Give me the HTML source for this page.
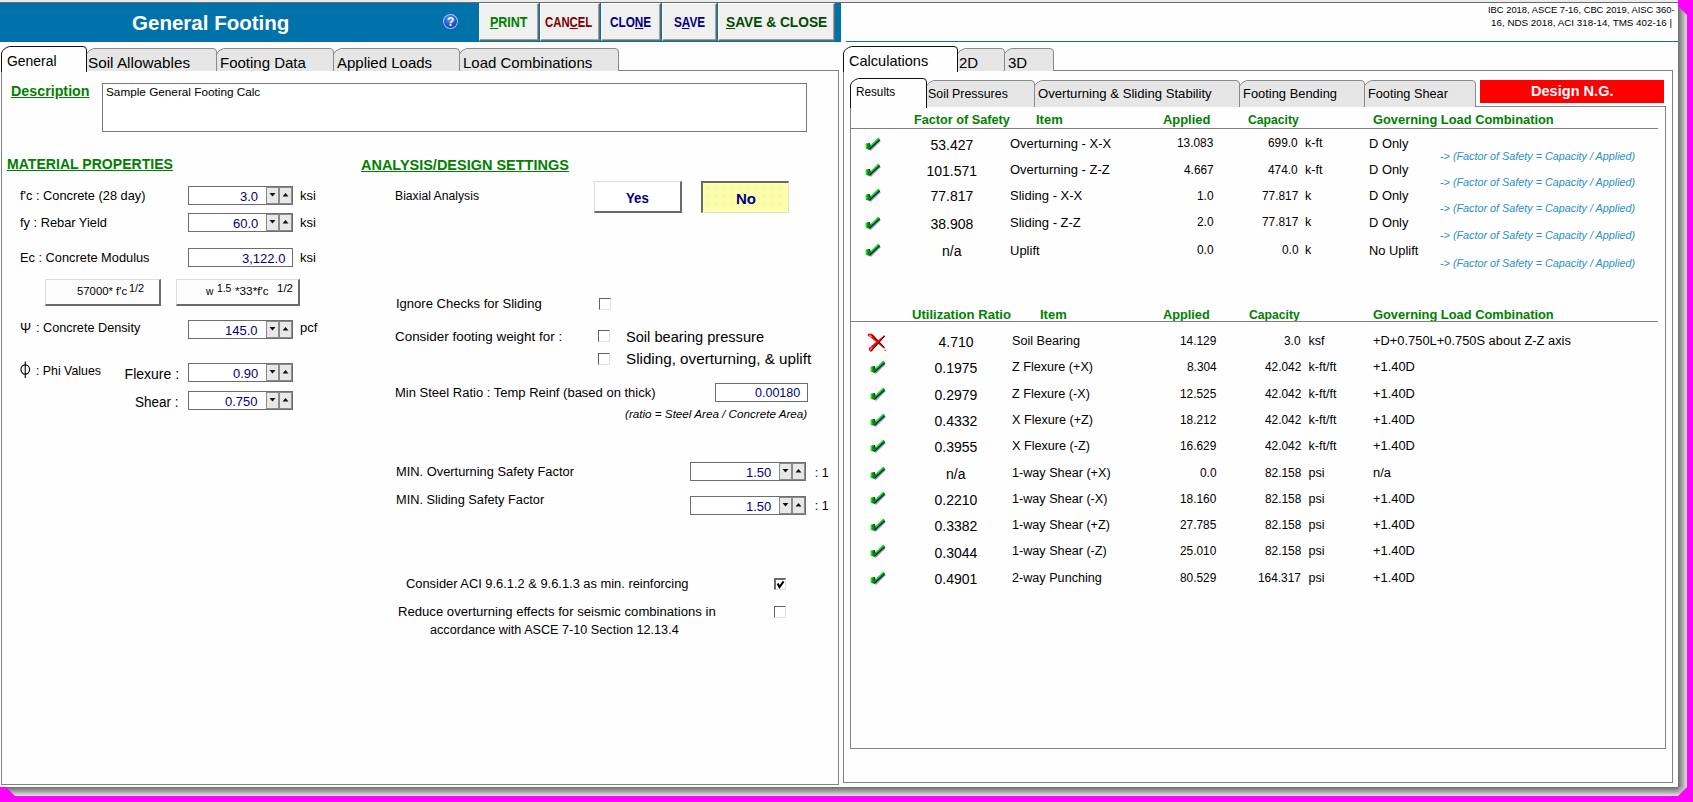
<!DOCTYPE html>
<html><head><meta charset="utf-8"><style>
html,body{margin:0;padding:0;}
body{width:1693px;height:802px;overflow:hidden;background:#ff00ff;position:relative;font-family:"Liberation Sans",sans-serif;}
.r{position:absolute;}
.t{position:absolute;white-space:nowrap;}
u{text-decoration:underline;}
</style></head><body>
<div class="r" style="left:0px;top:0px;width:1678px;height:787px;background:#fefefe;"></div>
<div class="r" style="left:0px;top:0px;width:1678px;height:2px;background:#ececec;"></div>
<div class="r" style="left:0px;top:2px;width:1678px;height:1px;background:#6a6a6a;"></div>
<div class="r" style="left:1678px;top:6px;width:9px;height:781px;clip-path:polygon(0 0,100% 9px,100% 100%,0 100%);background:linear-gradient(to right,#6e6e6e,#9a9a9a 40%,#e4e4e4);"></div>
<div class="r" style="left:6px;top:787px;width:1672px;height:9px;clip-path:polygon(0 0,100% 0,100% 100%,9px 100%);background:linear-gradient(to bottom,#6e6e6e,#9a9a9a 40%,#e4e4e4);"></div>
<div class="r" style="left:1678px;top:787px;width:9px;height:9px;clip-path:polygon(0 0,100% 0,0 100%);background:radial-gradient(circle at 0 0,#8a8a8a 0,#b8b8b8 5px,#e0e0e0 9px);"></div>
<div class="r" style="left:0px;top:3px;width:841px;height:39px;background:#0072aa;"></div>
<div class="t" style="left:132.00px;top:13.47px;font-size:20px;line-height:20px;color:#fff;font-weight:bold;transform:scaleX(1.0261);transform-origin:0 0;">General Footing</div>
<div class="r" style="left:443px;top:14px;width:15px;height:15px;border-radius:50%;background:radial-gradient(circle at 45% 35%,#5a9cff,#1a4cc8 55%,#0a2a8a);box-shadow:0 0 0 1px #a8c8ff inset;"></div>
<div class="t" style="left:447.00px;top:15.84px;font-size:12px;line-height:12px;color:#fff;font-weight:bold;">?</div>
<div class="r" style="left:479px;top:3px;width:60px;height:38px;background:#f0f0f0;border-top:1px solid #fff;border-left:1px solid #fff;border-right:1px solid #696969;border-bottom:1px solid #696969;box-shadow:inset -1px -1px 0 #a0a0a0;box-sizing:border-box;"></div>
<div class="t" style="left:490.00px;top:15.15px;font-size:14px;line-height:14px;color:#008000;font-weight:bold;transform:scaleX(0.8929);transform-origin:0 0;"><u>P</u>RINT</div>
<div class="r" style="left:540px;top:3px;width:60px;height:38px;background:#f0f0f0;border-top:1px solid #fff;border-left:1px solid #fff;border-right:1px solid #696969;border-bottom:1px solid #696969;box-shadow:inset -1px -1px 0 #a0a0a0;box-sizing:border-box;"></div>
<div class="t" style="left:545.20px;top:15.15px;font-size:14px;line-height:14px;color:#800000;font-weight:bold;transform:scaleX(0.8102);transform-origin:0 0;">CAN<u>C</u>EL</div>
<div class="r" style="left:601px;top:3px;width:60px;height:38px;background:#f0f0f0;border-top:1px solid #fff;border-left:1px solid #fff;border-right:1px solid #696969;border-bottom:1px solid #696969;box-shadow:inset -1px -1px 0 #a0a0a0;box-sizing:border-box;"></div>
<div class="t" style="left:610.00px;top:15.15px;font-size:14px;line-height:14px;color:#000080;font-weight:bold;transform:scaleX(0.8408);transform-origin:0 0;">CLO<u>N</u>E</div>
<div class="r" style="left:662px;top:3px;width:55px;height:38px;background:#f0f0f0;border-top:1px solid #fff;border-left:1px solid #fff;border-right:1px solid #696969;border-bottom:1px solid #696969;box-shadow:inset -1px -1px 0 #a0a0a0;box-sizing:border-box;"></div>
<div class="t" style="left:673.80px;top:15.15px;font-size:14px;line-height:14px;color:#000080;font-weight:bold;transform:scaleX(0.8405);transform-origin:0 0;">S<u>A</u>VE</div>
<div class="r" style="left:718px;top:3px;width:117px;height:38px;background:#f0f0f0;border-top:1px solid #fff;border-left:1px solid #fff;border-right:1px solid #696969;border-bottom:1px solid #696969;box-shadow:inset -1px -1px 0 #a0a0a0;box-sizing:border-box;"></div>
<div class="t" style="left:725.60px;top:15.15px;font-size:14px;line-height:14px;color:#004c00;font-weight:bold;transform:scaleX(0.9806);transform-origin:0 0;"><u>S</u>AVE &amp; CLOSE</div>
<div class="r" style="left:846px;top:41px;width:832px;height:1px;background:#0f6ea8;"></div>
<div class="t" style="left:1487.50px;top:5.16px;font-size:9.5px;line-height:9.5px;color:#000;transform:scaleX(0.9842);transform-origin:0 0;">IBC 2018, ASCE 7-16, CBC 2019, AISC 360-</div>
<div class="t" style="left:1490.70px;top:17.96px;font-size:9.5px;line-height:9.5px;color:#000;transform:scaleX(1.0343);transform-origin:0 0;">16, NDS 2018, ACI 318-14, TMS 402-16 |</div>
<div class="r" style="left:1px;top:70px;width:838px;height:715px;border:1px solid #828282;box-sizing:border-box;background:#fefefe;"></div>
<svg class="r" style="left:86px;top:48px" width="131" height="23"><path d="M0.5 23 L0.5 6 Q2.2 2.2 7.5 0.5 L127 0.5 Q130.5 0.5 130.5 4 L130.5 23 Z" fill="#e6e6e6" stroke="none"/><path d="M0.5 23 L0.5 6 Q2.2 2.2 7.5 0.5 L127 0.5 Q130.5 0.5 130.5 4 L130.5 23" fill="none" stroke="#8a8a8a" stroke-width="1"/></svg>
<svg class="r" style="left:216px;top:48px" width="118" height="23"><path d="M0.5 23 L0.5 6 Q2.2 2.2 7.5 0.5 L114 0.5 Q117.5 0.5 117.5 4 L117.5 23 Z" fill="#e6e6e6" stroke="none"/><path d="M0.5 23 L0.5 6 Q2.2 2.2 7.5 0.5 L114 0.5 Q117.5 0.5 117.5 4 L117.5 23" fill="none" stroke="#8a8a8a" stroke-width="1"/></svg>
<svg class="r" style="left:333px;top:48px" width="127" height="23"><path d="M0.5 23 L0.5 6 Q2.2 2.2 7.5 0.5 L123 0.5 Q126.5 0.5 126.5 4 L126.5 23 Z" fill="#e6e6e6" stroke="none"/><path d="M0.5 23 L0.5 6 Q2.2 2.2 7.5 0.5 L123 0.5 Q126.5 0.5 126.5 4 L126.5 23" fill="none" stroke="#8a8a8a" stroke-width="1"/></svg>
<svg class="r" style="left:459px;top:48px" width="160" height="23"><path d="M0.5 23 L0.5 6 Q2.2 2.2 7.5 0.5 L156 0.5 Q159.5 0.5 159.5 4 L159.5 23 Z" fill="#e6e6e6" stroke="none"/><path d="M0.5 23 L0.5 6 Q2.2 2.2 7.5 0.5 L156 0.5 Q159.5 0.5 159.5 4 L159.5 23" fill="none" stroke="#8a8a8a" stroke-width="1"/></svg>
<svg class="r" style="left:1px;top:46px" width="86" height="26"><path d="M0.5 26 L0.5 7 Q2.2 2.2 8.5 0.5 L82 0.5 Q85.5 0.5 85.5 4 L85.5 26 Z" fill="#fefefe" stroke="none"/><path d="M0.5 26 L0.5 7 Q2.2 2.2 8.5 0.5 L82 0.5 Q85.5 0.5 85.5 4 L85.5 26" fill="none" stroke="#111" stroke-width="1"/></svg>
<div class="t" style="left:7.10px;top:53.95px;font-size:14px;line-height:14px;color:#000;transform:scaleX(0.9940);transform-origin:0 0;">General</div>
<div class="t" style="left:88.00px;top:54.60px;font-size:15px;line-height:15px;color:#000;transform:scaleX(1.0200);transform-origin:0 0;">Soil Allowables</div>
<div class="t" style="left:220.00px;top:54.60px;font-size:15px;line-height:15px;color:#000;">Footing Data</div>
<div class="t" style="left:337.00px;top:54.60px;font-size:15px;line-height:15px;color:#000;">Applied Loads</div>
<div class="t" style="left:463.00px;top:54.60px;font-size:15px;line-height:15px;color:#000;">Load Combinations</div>
<div class="t" style="left:10.50px;top:83.00px;font-size:15px;line-height:15px;color:#008000;font-weight:bold;text-decoration:underline;transform:scaleX(0.9518);transform-origin:0 0;">Description</div>
<div class="r" style="left:102px;top:83px;width:705px;height:49px;border:1px solid #7a7a7a;box-sizing:border-box;background:#fff;"></div>
<div class="t" style="left:106.00px;top:86.69px;font-size:11px;line-height:11px;color:#000;transform:scaleX(1.0690);transform-origin:0 0;">Sample General Footing Calc</div>
<div class="t" style="left:6.70px;top:155.80px;font-size:15px;line-height:15px;color:#008000;font-weight:bold;text-decoration:underline;transform:scaleX(0.9379);transform-origin:0 0;">MATERIAL PROPERTIES</div>
<div class="t" style="left:360.50px;top:156.50px;font-size:15px;line-height:15px;color:#008000;font-weight:bold;text-decoration:underline;transform:scaleX(0.9651);transform-origin:0 0;">ANALYSIS/DESIGN SETTINGS</div>
<div class="t" style="left:20.30px;top:188.80px;font-size:13px;line-height:13px;color:#000;transform:scaleX(0.9844);transform-origin:0 0;">f&#x27;c : Concrete (28 day)</div>
<div class="r" style="left:188px;top:186px;width:105px;height:19px;border:1px solid #6e6e6e;box-sizing:border-box;background:#fff;"></div>
<div class="r" style="left:266px;top:187px;width:13px;height:17px;background:#e8e8e8;border:1px solid #8a8a8a;box-sizing:border-box;"></div>
<div class="r" style="left:279px;top:187px;width:13px;height:17px;background:#e8e8e8;border:1px solid #8a8a8a;box-sizing:border-box;"></div>
<svg class="r" style="left:0;top:0;overflow:visible" width="1" height="1"><polygon points="269.5,193.0 275.5,193.0 272.5,196.5" fill="#111"/><polygon points="282.5,196.5 288.5,196.5 285.5,193.0" fill="#111"/></svg>
<div class="t" style="left:240.00px;top:190.00px;font-size:13px;line-height:13px;color:#000080;">3.0</div>
<div class="t" style="left:300.00px;top:188.80px;font-size:13px;line-height:13px;color:#000;">ksi</div>
<div class="t" style="left:20.30px;top:215.80px;font-size:13px;line-height:13px;color:#000;transform:scaleX(0.9852);transform-origin:0 0;">fy : Rebar Yield</div>
<div class="r" style="left:188px;top:213px;width:105px;height:19px;border:1px solid #6e6e6e;box-sizing:border-box;background:#fff;"></div>
<div class="r" style="left:266px;top:214px;width:13px;height:17px;background:#e8e8e8;border:1px solid #8a8a8a;box-sizing:border-box;"></div>
<div class="r" style="left:279px;top:214px;width:13px;height:17px;background:#e8e8e8;border:1px solid #8a8a8a;box-sizing:border-box;"></div>
<svg class="r" style="left:0;top:0;overflow:visible" width="1" height="1"><polygon points="269.5,220.0 275.5,220.0 272.5,223.5" fill="#111"/><polygon points="282.5,223.5 288.5,223.5 285.5,220.0" fill="#111"/></svg>
<div class="t" style="left:233.00px;top:217.00px;font-size:13px;line-height:13px;color:#000080;">60.0</div>
<div class="t" style="left:300.00px;top:215.80px;font-size:13px;line-height:13px;color:#000;">ksi</div>
<div class="t" style="left:20.30px;top:251.00px;font-size:13px;line-height:13px;color:#000;transform:scaleX(0.9848);transform-origin:0 0;">Ec : Concrete Modulus</div>
<div class="r" style="left:188px;top:248px;width:105px;height:19px;border:1px solid #6e6e6e;box-sizing:border-box;background:#fff;"></div>
<div class="t" style="left:242.00px;top:252.00px;font-size:13px;line-height:13px;color:#000080;">3,122.0</div>
<div class="t" style="left:300.00px;top:251.00px;font-size:13px;line-height:13px;color:#000;">ksi</div>
<div class="r" style="left:45px;top:279px;width:116px;height:27px;background:#fcfcfc;border-top:1px solid #dcdcdc;border-left:1px solid #dcdcdc;border-right:2px solid #6a6a6a;border-bottom:2px solid #6a6a6a;box-sizing:border-box;"></div>
<div class="r" style="left:176px;top:279px;width:124px;height:27px;background:#fcfcfc;border-top:1px solid #dcdcdc;border-left:1px solid #dcdcdc;border-right:2px solid #6a6a6a;border-bottom:2px solid #6a6a6a;box-sizing:border-box;"></div>
<div class="t" style="left:77.40px;top:285.89px;font-size:11px;line-height:11px;color:#000;transform:scaleX(1.0306);transform-origin:0 0;">57000* f&#x27;c</div>
<div class="t" style="left:128.80px;top:283.09px;font-size:11px;line-height:11px;color:#000;transform:scaleX(0.9933);transform-origin:0 0;">1/2</div>
<div class="t" style="left:206.33px;top:286.29px;font-size:11px;line-height:11px;color:#000;transform:scaleX(0.9333);transform-origin:0 0;">w</div>
<div class="t" style="left:216.60px;top:282.59px;font-size:11px;line-height:11px;color:#000;transform:scaleX(0.9400);transform-origin:0 0;">1.5</div>
<div class="t" style="left:235.30px;top:285.89px;font-size:11px;line-height:11px;color:#000;transform:scaleX(1.0688);transform-origin:0 0;">*33*f&#x27;c</div>
<div class="t" style="left:277.00px;top:282.69px;font-size:11px;line-height:11px;color:#000;transform:scaleX(1.0467);transform-origin:0 0;">1/2</div>
<div class="t" style="left:20.00px;top:320.30px;font-size:15px;line-height:15px;color:#000;transform:scaleX(0.8846);transform-origin:0 0;">Ψ</div>
<div class="t" style="left:36.20px;top:320.80px;font-size:13px;line-height:13px;color:#000;transform:scaleX(0.9748);transform-origin:0 0;">: Concrete Density</div>
<div class="r" style="left:188px;top:320px;width:105px;height:19px;border:1px solid #6e6e6e;box-sizing:border-box;background:#fff;"></div>
<div class="r" style="left:266px;top:321px;width:13px;height:17px;background:#e8e8e8;border:1px solid #8a8a8a;box-sizing:border-box;"></div>
<div class="r" style="left:279px;top:321px;width:13px;height:17px;background:#e8e8e8;border:1px solid #8a8a8a;box-sizing:border-box;"></div>
<svg class="r" style="left:0;top:0;overflow:visible" width="1" height="1"><polygon points="269.5,327.0 275.5,327.0 272.5,330.5" fill="#111"/><polygon points="282.5,330.5 288.5,330.5 285.5,327.0" fill="#111"/></svg>
<div class="t" style="left:225.00px;top:324.00px;font-size:13px;line-height:13px;color:#000080;">145.0</div>
<div class="t" style="left:300.00px;top:320.80px;font-size:13px;line-height:13px;color:#000;">pcf</div>
<svg class="r" style="left:18px;top:359px" width="16" height="22"><ellipse cx="7.25" cy="10.5" rx="4.3" ry="4.6" fill="none" stroke="#000" stroke-width="1.1"/><path d="M7.25 2.5 L7.25 19" stroke="#000" stroke-width="1.1"/></svg>
<div class="t" style="left:36.20px;top:363.90px;font-size:13px;line-height:13px;color:#000;transform:scaleX(0.9493);transform-origin:0 0;">: Phi Values</div>
<div class="t" style="left:124.60px;top:367.15px;font-size:14px;line-height:14px;color:#000;">Flexure :</div>
<div class="r" style="left:188px;top:363px;width:105px;height:19px;border:1px solid #6e6e6e;box-sizing:border-box;background:#fff;"></div>
<div class="r" style="left:266px;top:364px;width:13px;height:17px;background:#e8e8e8;border:1px solid #8a8a8a;box-sizing:border-box;"></div>
<div class="r" style="left:279px;top:364px;width:13px;height:17px;background:#e8e8e8;border:1px solid #8a8a8a;box-sizing:border-box;"></div>
<svg class="r" style="left:0;top:0;overflow:visible" width="1" height="1"><polygon points="269.5,370.0 275.5,370.0 272.5,373.5" fill="#111"/><polygon points="282.5,373.5 288.5,373.5 285.5,370.0" fill="#111"/></svg>
<div class="t" style="left:233.00px;top:367.00px;font-size:13px;line-height:13px;color:#000080;">0.90</div>
<div class="t" style="left:134.70px;top:394.75px;font-size:14px;line-height:14px;color:#000;transform:scaleX(0.9667);transform-origin:0 0;">Shear :</div>
<div class="r" style="left:188px;top:391px;width:105px;height:19px;border:1px solid #6e6e6e;box-sizing:border-box;background:#fff;"></div>
<div class="r" style="left:266px;top:392px;width:13px;height:17px;background:#e8e8e8;border:1px solid #8a8a8a;box-sizing:border-box;"></div>
<div class="r" style="left:279px;top:392px;width:13px;height:17px;background:#e8e8e8;border:1px solid #8a8a8a;box-sizing:border-box;"></div>
<svg class="r" style="left:0;top:0;overflow:visible" width="1" height="1"><polygon points="269.5,398.0 275.5,398.0 272.5,401.5" fill="#111"/><polygon points="282.5,401.5 288.5,401.5 285.5,398.0" fill="#111"/></svg>
<div class="t" style="left:225.00px;top:395.00px;font-size:13px;line-height:13px;color:#000080;">0.750</div>
<div class="t" style="left:395.40px;top:189.92px;font-size:12.5px;line-height:12.5px;color:#000;transform:scaleX(0.9747);transform-origin:0 0;">Biaxial Analysis</div>
<div class="r" style="left:594px;top:181px;width:88px;height:32px;background:#fff;border-top:1px solid #dcdcdc;border-left:1px solid #dcdcdc;border-right:2px solid #6a6a6a;border-bottom:2px solid #6a6a6a;box-sizing:border-box;"></div>
<div class="t" style="left:626.10px;top:190.30px;font-size:15px;line-height:15px;color:#000080;font-weight:bold;transform:scaleX(0.8846);transform-origin:0 0;">Yes</div>
<div class="r" style="left:701px;top:181px;width:88px;height:32px;background:#ffffb0;border-top:2px solid #6a6a6a;border-left:2px solid #6a6a6a;border-right:1px solid #e0e0e0;border-bottom:1px solid #e0e0e0;box-sizing:border-box;"></div>
<svg class="r" style="left:703px;top:183px" width="84" height="28"><defs><pattern id="dith" x="0" y="0" width="2" height="2" patternUnits="userSpaceOnUse"><rect width="2" height="2" fill="#fff"/><rect x="0" y="0" width="1" height="1" fill="#ffff5a"/><rect x="1" y="1" width="1" height="1" fill="#ffff5a"/></pattern></defs><rect width="84" height="28" fill="url(#dith)"/></svg>
<div class="t" style="left:736.00px;top:191.10px;font-size:15px;line-height:15px;color:#000080;font-weight:bold;">No</div>
<div class="t" style="left:396.40px;top:298.22px;font-size:12.5px;line-height:12.5px;color:#000;transform:scaleX(1.0429);transform-origin:0 0;">Ignore Checks for Sliding</div>
<div class="r" style="left:599px;top:298px;width:12px;height:12px;border-top:1px solid #606060;border-left:1px solid #606060;border-right:1px solid #e0e0e0;border-bottom:1px solid #e0e0e0;box-sizing:border-box;background:#fff;"></div>
<div class="t" style="left:395.40px;top:330.72px;font-size:12.5px;line-height:12.5px;color:#000;transform:scaleX(1.0737);transform-origin:0 0;">Consider footing weight for :</div>
<div class="r" style="left:598px;top:330px;width:12px;height:12px;border-top:1px solid #606060;border-left:1px solid #606060;border-right:1px solid #e0e0e0;border-bottom:1px solid #e0e0e0;box-sizing:border-box;background:#fff;"></div>
<div class="t" style="left:625.70px;top:329.73px;font-size:14.5px;line-height:14.5px;color:#000;transform:scaleX(1.0073);transform-origin:0 0;">Soil bearing pressure</div>
<div class="r" style="left:598px;top:353px;width:12px;height:12px;border-top:1px solid #606060;border-left:1px solid #606060;border-right:1px solid #e0e0e0;border-bottom:1px solid #e0e0e0;box-sizing:border-box;background:#fff;"></div>
<div class="t" style="left:625.70px;top:352.43px;font-size:14.5px;line-height:14.5px;color:#000;transform:scaleX(1.0492);transform-origin:0 0;">Sliding, overturning, &amp; uplift</div>
<div class="t" style="left:395.40px;top:386.92px;font-size:12.5px;line-height:12.5px;color:#000;transform:scaleX(1.0398);transform-origin:0 0;">Min Steel Ratio : Temp Reinf (based on thick)</div>
<div class="r" style="left:715px;top:383px;width:93px;height:19px;border:1px solid #6e6e6e;box-sizing:border-box;background:#fff;"></div>
<div class="t" style="left:755.00px;top:386.92px;font-size:12.5px;line-height:12.5px;color:#000080;">0.00180</div>
<div class="t" style="left:624.70px;top:408.57px;font-size:11.5px;line-height:11.5px;color:#000;font-style:italic;transform:scaleX(1.0139);transform-origin:0 0;">(ratio = Steel Area / Concrete Area)</div>
<div class="t" style="left:395.50px;top:465.62px;font-size:12.5px;line-height:12.5px;color:#000;transform:scaleX(1.0287);transform-origin:0 0;">MIN. Overturning Safety Factor</div>
<div class="r" style="left:690px;top:462px;width:116px;height:19px;border:1px solid #6e6e6e;box-sizing:border-box;background:#fff;"></div>
<div class="r" style="left:779px;top:463px;width:13px;height:17px;background:#e8e8e8;border:1px solid #8a8a8a;box-sizing:border-box;"></div>
<div class="r" style="left:792px;top:463px;width:13px;height:17px;background:#e8e8e8;border:1px solid #8a8a8a;box-sizing:border-box;"></div>
<svg class="r" style="left:0;top:0;overflow:visible" width="1" height="1"><polygon points="782.5,469.0 788.5,469.0 785.5,472.5" fill="#111"/><polygon points="795.5,472.5 801.5,472.5 798.5,469.0" fill="#111"/></svg>
<div class="t" style="left:746.00px;top:466.00px;font-size:13px;line-height:13px;color:#000080;">1.50</div>
<div class="t" style="left:814.70px;top:466.62px;font-size:12.5px;line-height:12.5px;color:#000;">: 1</div>
<div class="t" style="left:395.50px;top:493.52px;font-size:12.5px;line-height:12.5px;color:#000;transform:scaleX(1.0205);transform-origin:0 0;">MIN. Sliding Safety Factor</div>
<div class="r" style="left:690px;top:496px;width:116px;height:19px;border:1px solid #6e6e6e;box-sizing:border-box;background:#fff;"></div>
<div class="r" style="left:779px;top:497px;width:13px;height:17px;background:#e8e8e8;border:1px solid #8a8a8a;box-sizing:border-box;"></div>
<div class="r" style="left:792px;top:497px;width:13px;height:17px;background:#e8e8e8;border:1px solid #8a8a8a;box-sizing:border-box;"></div>
<svg class="r" style="left:0;top:0;overflow:visible" width="1" height="1"><polygon points="782.5,503.0 788.5,503.0 785.5,506.5" fill="#111"/><polygon points="795.5,506.5 801.5,506.5 798.5,503.0" fill="#111"/></svg>
<div class="t" style="left:746.00px;top:500.00px;font-size:13px;line-height:13px;color:#000080;">1.50</div>
<div class="t" style="left:814.70px;top:500.02px;font-size:12.5px;line-height:12.5px;color:#000;">: 1</div>
<div class="t" style="left:405.70px;top:578.42px;font-size:12.5px;line-height:12.5px;color:#000;transform:scaleX(1.0292);transform-origin:0 0;">Consider ACI 9.6.1.2 &amp; 9.6.1.3 as min. reinforcing</div>
<div class="r" style="left:774px;top:578px;width:12px;height:12px;border-top:2px solid #6a6a6a;border-left:2px solid #6a6a6a;border-right:1px solid #e0e0e0;border-bottom:1px solid #e0e0e0;box-sizing:border-box;background:#fff;"></div>
<svg class="r" style="left:774px;top:578px" width="12" height="12"><path d="M3.6 5.4 L5.5 9 L9.6 3.4" stroke="#000" stroke-width="2.1" fill="none" stroke-linejoin="miter"/></svg>
<div class="t" style="left:397.50px;top:606.02px;font-size:12.5px;line-height:12.5px;color:#000;transform:scaleX(1.0495);transform-origin:0 0;">Reduce overturning effects for seismic combinations in</div>
<div class="t" style="left:429.90px;top:624.02px;font-size:12.5px;line-height:12.5px;color:#000;transform:scaleX(1.0110);transform-origin:0 0;">accordance with ASCE 7-10 Section 12.13.4</div>
<div class="r" style="left:774px;top:606px;width:12px;height:12px;border-top:1px solid #606060;border-left:1px solid #606060;border-right:1px solid #e0e0e0;border-bottom:1px solid #e0e0e0;box-sizing:border-box;background:#fff;"></div>
<div class="r" style="left:843px;top:70px;width:830px;height:713px;border:1px solid #828282;box-sizing:border-box;background:#fefefe;"></div>
<svg class="r" style="left:957px;top:48px" width="48" height="23"><path d="M0.5 23 L0.5 6 Q2.2 2.2 7.5 0.5 L44 0.5 Q47.5 0.5 47.5 4 L47.5 23 Z" fill="#e6e6e6" stroke="none"/><path d="M0.5 23 L0.5 6 Q2.2 2.2 7.5 0.5 L44 0.5 Q47.5 0.5 47.5 4 L47.5 23" fill="none" stroke="#8a8a8a" stroke-width="1"/></svg>
<svg class="r" style="left:1004px;top:48px" width="50" height="23"><path d="M0.5 23 L0.5 6 Q2.2 2.2 7.5 0.5 L46 0.5 Q49.5 0.5 49.5 4 L49.5 23 Z" fill="#e6e6e6" stroke="none"/><path d="M0.5 23 L0.5 6 Q2.2 2.2 7.5 0.5 L46 0.5 Q49.5 0.5 49.5 4 L49.5 23" fill="none" stroke="#8a8a8a" stroke-width="1"/></svg>
<svg class="r" style="left:843px;top:46px" width="115" height="26"><path d="M0.5 26 L0.5 7 Q2.2 2.2 8.5 0.5 L111 0.5 Q114.5 0.5 114.5 4 L114.5 26 Z" fill="#fefefe" stroke="none"/><path d="M0.5 26 L0.5 7 Q2.2 2.2 8.5 0.5 L111 0.5 Q114.5 0.5 114.5 4 L114.5 26" fill="none" stroke="#111" stroke-width="1"/></svg>
<div class="t" style="left:848.80px;top:53.30px;font-size:15px;line-height:15px;color:#000;transform:scaleX(0.9695);transform-origin:0 0;">Calculations</div>
<div class="t" style="left:959.00px;top:54.60px;font-size:15px;line-height:15px;color:#000;">2D</div>
<div class="t" style="left:1008.00px;top:54.60px;font-size:15px;line-height:15px;color:#000;">3D</div>
<div class="r" style="left:850px;top:106px;width:816px;height:643px;border:1px solid #828282;box-sizing:border-box;background:#fefefe;"></div>
<svg class="r" style="left:926px;top:80px" width="109" height="27"><path d="M0.5 27 L0.5 6 Q2.2 2.2 7.5 0.5 L105 0.5 Q108.5 0.5 108.5 4 L108.5 27 Z" fill="#e6e6e6" stroke="none"/><path d="M0.5 27 L0.5 6 Q2.2 2.2 7.5 0.5 L105 0.5 Q108.5 0.5 108.5 4 L108.5 27" fill="none" stroke="#8a8a8a" stroke-width="1"/></svg>
<svg class="r" style="left:1034px;top:80px" width="206" height="27"><path d="M0.5 27 L0.5 6 Q2.2 2.2 7.5 0.5 L202 0.5 Q205.5 0.5 205.5 4 L205.5 27 Z" fill="#e6e6e6" stroke="none"/><path d="M0.5 27 L0.5 6 Q2.2 2.2 7.5 0.5 L202 0.5 Q205.5 0.5 205.5 4 L205.5 27" fill="none" stroke="#8a8a8a" stroke-width="1"/></svg>
<svg class="r" style="left:1239px;top:80px" width="126" height="27"><path d="M0.5 27 L0.5 6 Q2.2 2.2 7.5 0.5 L122 0.5 Q125.5 0.5 125.5 4 L125.5 27 Z" fill="#e6e6e6" stroke="none"/><path d="M0.5 27 L0.5 6 Q2.2 2.2 7.5 0.5 L122 0.5 Q125.5 0.5 125.5 4 L125.5 27" fill="none" stroke="#8a8a8a" stroke-width="1"/></svg>
<svg class="r" style="left:1364px;top:80px" width="112" height="27"><path d="M0.5 27 L0.5 6 Q2.2 2.2 7.5 0.5 L108 0.5 Q111.5 0.5 111.5 4 L111.5 27 Z" fill="#e6e6e6" stroke="none"/><path d="M0.5 27 L0.5 6 Q2.2 2.2 7.5 0.5 L108 0.5 Q111.5 0.5 111.5 4 L111.5 27" fill="none" stroke="#8a8a8a" stroke-width="1"/></svg>
<svg class="r" style="left:850px;top:78px" width="77" height="30"><path d="M0.5 30 L0.5 7 Q2.2 2.2 8.5 0.5 L73 0.5 Q76.5 0.5 76.5 4 L76.5 30 Z" fill="#fefefe" stroke="none"/><path d="M0.5 30 L0.5 7 Q2.2 2.2 8.5 0.5 L73 0.5 Q76.5 0.5 76.5 4 L76.5 30" fill="none" stroke="#111" stroke-width="1"/></svg>
<div class="t" style="left:855.90px;top:84.60px;font-size:13px;line-height:13px;color:#000;transform:scaleX(0.9023);transform-origin:0 0;">Results</div>
<div class="t" style="left:927.50px;top:86.90px;font-size:13px;line-height:13px;color:#000;transform:scaleX(0.9524);transform-origin:0 0;">Soil Pressures</div>
<div class="t" style="left:1038.20px;top:86.90px;font-size:13px;line-height:13px;color:#000;transform:scaleX(1.0098);transform-origin:0 0;">Overturning &amp; Sliding Stability</div>
<div class="t" style="left:1243.30px;top:86.90px;font-size:13px;line-height:13px;color:#000;transform:scaleX(0.9926);transform-origin:0 0;">Footing Bending</div>
<div class="t" style="left:1368.30px;top:86.90px;font-size:13px;line-height:13px;color:#000;transform:scaleX(0.9780);transform-origin:0 0;">Footing Shear</div>
<div class="r" style="left:1480px;top:80px;width:184px;height:23px;background:#ff0000;"></div>
<div class="t" style="left:1531.00px;top:82.80px;font-size:15px;line-height:15px;color:#fff;font-weight:bold;transform:scaleX(0.9706);transform-origin:0 0;">Design N.G.</div>
<div class="t" style="left:914.40px;top:112.80px;font-size:13px;line-height:13px;color:#008000;font-weight:bold;transform:scaleX(0.9758);transform-origin:0 0;">Factor of Safety</div>
<div class="t" style="left:1036.00px;top:112.80px;font-size:13px;line-height:13px;color:#008000;font-weight:bold;">Item</div>
<div class="t" style="left:1163.00px;top:112.80px;font-size:13px;line-height:13px;color:#008000;font-weight:bold;transform:scaleX(0.9938);transform-origin:0 0;">Applied</div>
<div class="t" style="left:1248.30px;top:112.80px;font-size:13px;line-height:13px;color:#008000;font-weight:bold;transform:scaleX(0.9364);transform-origin:0 0;">Capacity</div>
<div class="t" style="left:1373.00px;top:112.80px;font-size:13px;line-height:13px;color:#008000;font-weight:bold;transform:scaleX(0.9891);transform-origin:0 0;">Governing Load Combination</div>
<div class="r" style="left:850px;top:128px;width:808px;height:1px;background:#808080;"></div>
<svg class="r" style="left:862px;top:134px" width="22" height="20"><path d="M8.3 16.6 L18.3 6.8" stroke="#9a9a9a" stroke-width="1.3" fill="none"/><polygon points="3.8,9.8 6.8,9 8.3,12.2 16.6,3.8 17.8,5.2 8.2,15.8 6.8,15.8 3.8,14.6" fill="#008a00"/><path d="M4.6 10 L4.6 14.6" stroke="#00f000" stroke-width="1.4" fill="none"/><path d="M8.8 11.8 L16.6 4.2" stroke="#00f000" stroke-width="1.3" fill="none"/><path d="M7.6 15.4 L17.8 5.8" stroke="#000080" stroke-width="1.1" fill="none"/><path d="M7.4 9.2 L8.2 12" stroke="#000080" stroke-width="1" fill="none"/></svg>
<div class="t" style="left:930.50px;top:137.90px;font-size:14px;line-height:14px;color:#000;">53.427</div>
<div class="t" style="left:1009.60px;top:137.72px;font-size:12.5px;line-height:12.5px;color:#000;transform:scaleX(1.0400);transform-origin:0 0;">Overturning - X-X</div>
<div class="t" style="left:1177.20px;top:137.42px;font-size:12.5px;line-height:12.5px;color:#000;transform:scaleX(0.9500);transform-origin:0 0;">13.083</div>
<div class="t" style="left:1268.25px;top:137.42px;font-size:12.5px;line-height:12.5px;color:#000;transform:scaleX(0.9500);transform-origin:0 0;">699.0</div>
<div class="t" style="left:1305.00px;top:137.42px;font-size:12.5px;line-height:12.5px;color:#000;">k-ft</div>
<div class="t" style="left:1369.00px;top:137.92px;font-size:12.5px;line-height:12.5px;color:#000;transform:scaleX(1.0300);transform-origin:0 0;">D Only</div>
<svg class="r" style="left:862px;top:160px" width="22" height="20"><path d="M8.3 16.6 L18.3 6.8" stroke="#9a9a9a" stroke-width="1.3" fill="none"/><polygon points="3.8,9.8 6.8,9 8.3,12.2 16.6,3.8 17.8,5.2 8.2,15.8 6.8,15.8 3.8,14.6" fill="#008a00"/><path d="M4.6 10 L4.6 14.6" stroke="#00f000" stroke-width="1.4" fill="none"/><path d="M8.8 11.8 L16.6 4.2" stroke="#00f000" stroke-width="1.3" fill="none"/><path d="M7.6 15.4 L17.8 5.8" stroke="#000080" stroke-width="1.1" fill="none"/><path d="M7.4 9.2 L8.2 12" stroke="#000080" stroke-width="1" fill="none"/></svg>
<div class="t" style="left:926.50px;top:163.65px;font-size:14px;line-height:14px;color:#000;">101.571</div>
<div class="t" style="left:1009.60px;top:163.82px;font-size:12.5px;line-height:12.5px;color:#000;transform:scaleX(1.0400);transform-origin:0 0;">Overturning - Z-Z</div>
<div class="t" style="left:1183.85px;top:163.52px;font-size:12.5px;line-height:12.5px;color:#000;transform:scaleX(0.9500);transform-origin:0 0;">4.667</div>
<div class="t" style="left:1268.25px;top:163.52px;font-size:12.5px;line-height:12.5px;color:#000;transform:scaleX(0.9500);transform-origin:0 0;">474.0</div>
<div class="t" style="left:1305.00px;top:163.52px;font-size:12.5px;line-height:12.5px;color:#000;">k-ft</div>
<div class="t" style="left:1369.00px;top:164.02px;font-size:12.5px;line-height:12.5px;color:#000;transform:scaleX(1.0300);transform-origin:0 0;">D Only</div>
<svg class="r" style="left:862px;top:185px" width="22" height="20"><path d="M8.3 16.6 L18.3 6.8" stroke="#9a9a9a" stroke-width="1.3" fill="none"/><polygon points="3.8,9.8 6.8,9 8.3,12.2 16.6,3.8 17.8,5.2 8.2,15.8 6.8,15.8 3.8,14.6" fill="#008a00"/><path d="M4.6 10 L4.6 14.6" stroke="#00f000" stroke-width="1.4" fill="none"/><path d="M8.8 11.8 L16.6 4.2" stroke="#00f000" stroke-width="1.3" fill="none"/><path d="M7.6 15.4 L17.8 5.8" stroke="#000080" stroke-width="1.1" fill="none"/><path d="M7.4 9.2 L8.2 12" stroke="#000080" stroke-width="1" fill="none"/></svg>
<div class="t" style="left:930.50px;top:189.35px;font-size:14px;line-height:14px;color:#000;">77.817</div>
<div class="t" style="left:1009.60px;top:190.02px;font-size:12.5px;line-height:12.5px;color:#000;transform:scaleX(1.0400);transform-origin:0 0;">Sliding - X-X</div>
<div class="t" style="left:1197.15px;top:189.72px;font-size:12.5px;line-height:12.5px;color:#000;transform:scaleX(0.9500);transform-origin:0 0;">1.0</div>
<div class="t" style="left:1261.60px;top:189.72px;font-size:12.5px;line-height:12.5px;color:#000;transform:scaleX(0.9500);transform-origin:0 0;">77.817</div>
<div class="t" style="left:1305.00px;top:189.72px;font-size:12.5px;line-height:12.5px;color:#000;">k</div>
<div class="t" style="left:1369.00px;top:190.22px;font-size:12.5px;line-height:12.5px;color:#000;transform:scaleX(1.0300);transform-origin:0 0;">D Only</div>
<svg class="r" style="left:862px;top:213px" width="22" height="20"><path d="M8.3 16.6 L18.3 6.8" stroke="#9a9a9a" stroke-width="1.3" fill="none"/><polygon points="3.8,9.8 6.8,9 8.3,12.2 16.6,3.8 17.8,5.2 8.2,15.8 6.8,15.8 3.8,14.6" fill="#008a00"/><path d="M4.6 10 L4.6 14.6" stroke="#00f000" stroke-width="1.4" fill="none"/><path d="M8.8 11.8 L16.6 4.2" stroke="#00f000" stroke-width="1.3" fill="none"/><path d="M7.6 15.4 L17.8 5.8" stroke="#000080" stroke-width="1.1" fill="none"/><path d="M7.4 9.2 L8.2 12" stroke="#000080" stroke-width="1" fill="none"/></svg>
<div class="t" style="left:930.50px;top:216.85px;font-size:14px;line-height:14px;color:#000;">38.908</div>
<div class="t" style="left:1009.60px;top:216.72px;font-size:12.5px;line-height:12.5px;color:#000;transform:scaleX(1.0400);transform-origin:0 0;">Sliding - Z-Z</div>
<div class="t" style="left:1197.15px;top:216.42px;font-size:12.5px;line-height:12.5px;color:#000;transform:scaleX(0.9500);transform-origin:0 0;">2.0</div>
<div class="t" style="left:1261.60px;top:216.42px;font-size:12.5px;line-height:12.5px;color:#000;transform:scaleX(0.9500);transform-origin:0 0;">77.817</div>
<div class="t" style="left:1305.00px;top:216.42px;font-size:12.5px;line-height:12.5px;color:#000;">k</div>
<div class="t" style="left:1369.00px;top:216.92px;font-size:12.5px;line-height:12.5px;color:#000;transform:scaleX(1.0300);transform-origin:0 0;">D Only</div>
<svg class="r" style="left:862px;top:240px" width="22" height="20"><path d="M8.3 16.6 L18.3 6.8" stroke="#9a9a9a" stroke-width="1.3" fill="none"/><polygon points="3.8,9.8 6.8,9 8.3,12.2 16.6,3.8 17.8,5.2 8.2,15.8 6.8,15.8 3.8,14.6" fill="#008a00"/><path d="M4.6 10 L4.6 14.6" stroke="#00f000" stroke-width="1.4" fill="none"/><path d="M8.8 11.8 L16.6 4.2" stroke="#00f000" stroke-width="1.3" fill="none"/><path d="M7.6 15.4 L17.8 5.8" stroke="#000080" stroke-width="1.1" fill="none"/><path d="M7.4 9.2 L8.2 12" stroke="#000080" stroke-width="1" fill="none"/></svg>
<div class="t" style="left:942.00px;top:243.75px;font-size:14px;line-height:14px;color:#000;">n/a</div>
<div class="t" style="left:1009.60px;top:244.52px;font-size:12.5px;line-height:12.5px;color:#000;transform:scaleX(1.0400);transform-origin:0 0;">Uplift</div>
<div class="t" style="left:1197.15px;top:244.22px;font-size:12.5px;line-height:12.5px;color:#000;transform:scaleX(0.9500);transform-origin:0 0;">0.0</div>
<div class="t" style="left:1281.55px;top:244.22px;font-size:12.5px;line-height:12.5px;color:#000;transform:scaleX(0.9500);transform-origin:0 0;">0.0</div>
<div class="t" style="left:1305.00px;top:244.22px;font-size:12.5px;line-height:12.5px;color:#000;">k</div>
<div class="t" style="left:1369.00px;top:244.72px;font-size:12.5px;line-height:12.5px;color:#000;transform:scaleX(1.0300);transform-origin:0 0;">No Uplift</div>
<div class="t" style="left:1439.50px;top:150.99px;font-size:11px;line-height:11px;color:#2a8fc8;font-style:italic;transform:scaleX(0.9814);transform-origin:0 0;">-&gt; (Factor of Safety = Capacity / Applied)</div>
<div class="t" style="left:1439.50px;top:176.89px;font-size:11px;line-height:11px;color:#2a8fc8;font-style:italic;transform:scaleX(0.9814);transform-origin:0 0;">-&gt; (Factor of Safety = Capacity / Applied)</div>
<div class="t" style="left:1439.50px;top:202.89px;font-size:11px;line-height:11px;color:#2a8fc8;font-style:italic;transform:scaleX(0.9814);transform-origin:0 0;">-&gt; (Factor of Safety = Capacity / Applied)</div>
<div class="t" style="left:1439.50px;top:229.69px;font-size:11px;line-height:11px;color:#2a8fc8;font-style:italic;transform:scaleX(0.9814);transform-origin:0 0;">-&gt; (Factor of Safety = Capacity / Applied)</div>
<div class="t" style="left:1439.50px;top:257.69px;font-size:11px;line-height:11px;color:#2a8fc8;font-style:italic;transform:scaleX(0.9814);transform-origin:0 0;">-&gt; (Factor of Safety = Capacity / Applied)</div>
<div class="t" style="left:912.30px;top:307.50px;font-size:13px;line-height:13px;color:#008000;font-weight:bold;transform:scaleX(1.0071);transform-origin:0 0;">Utilization Ratio</div>
<div class="t" style="left:1040.00px;top:307.50px;font-size:13px;line-height:13px;color:#008000;font-weight:bold;">Item</div>
<div class="t" style="left:1163.00px;top:307.50px;font-size:13px;line-height:13px;color:#008000;font-weight:bold;transform:scaleX(0.9792);transform-origin:0 0;">Applied</div>
<div class="t" style="left:1248.50px;top:307.50px;font-size:13px;line-height:13px;color:#008000;font-weight:bold;transform:scaleX(0.9364);transform-origin:0 0;">Capacity</div>
<div class="t" style="left:1373.00px;top:307.50px;font-size:13px;line-height:13px;color:#008000;font-weight:bold;transform:scaleX(0.9891);transform-origin:0 0;">Governing Load Combination</div>
<div class="r" style="left:850px;top:321px;width:808px;height:1px;background:#808080;"></div>
<svg class="r" style="left:864px;top:330px" width="26" height="24"><polygon points="3.8,3.8 8,3.8 20.8,17.8 20.2,18.8 6.5,7.2 3.8,5.8" fill="#ff0000"/><path d="M8 4.5 L20.5 17.5" stroke="#000" stroke-width="1" fill="none"/><polygon points="4.8,17.8 6.2,17 20.5,5 20.8,6 7.5,21.5 5,20.5" fill="#ff0000"/><path d="M6.8 21.5 L20.8 6" stroke="#000" stroke-width="1" fill="none"/><rect x="5.5" y="5" width="1" height="1" fill="#fff"/><rect x="6.5" y="6" width="1" height="1" fill="#fff"/><rect x="6.2" y="18.5" width="1" height="1" fill="#fff"/><rect x="7.2" y="17.5" width="1" height="1" fill="#fff"/><rect x="20.5" y="19.8" width="1.2" height="1.2" fill="#ff0000"/></svg>
<div class="t" style="left:938.50px;top:335.15px;font-size:14px;line-height:14px;color:#000;">4.710</div>
<div class="t" style="left:1012.30px;top:335.02px;font-size:12.5px;line-height:12.5px;color:#000;transform:scaleX(1.0100);transform-origin:0 0;">Soil Bearing</div>
<div class="t" style="left:1180.40px;top:335.02px;font-size:12.5px;line-height:12.5px;color:#000;transform:scaleX(0.9500);transform-origin:0 0;">14.129</div>
<div class="t" style="left:1284.45px;top:335.02px;font-size:12.5px;line-height:12.5px;color:#000;transform:scaleX(0.9500);transform-origin:0 0;">3.0</div>
<div class="t" style="left:1308.60px;top:335.02px;font-size:12.5px;line-height:12.5px;color:#000;">ksf</div>
<div class="t" style="left:1373.20px;top:335.02px;font-size:12.5px;line-height:12.5px;color:#000;transform:scaleX(1.0300);transform-origin:0 0;">+D+0.750L+0.750S about Z-Z axis</div>
<svg class="r" style="left:867px;top:357px" width="22" height="20"><path d="M8.3 16.6 L18.3 6.8" stroke="#9a9a9a" stroke-width="1.3" fill="none"/><polygon points="3.8,9.8 6.8,9 8.3,12.2 16.6,3.8 17.8,5.2 8.2,15.8 6.8,15.8 3.8,14.6" fill="#008a00"/><path d="M4.6 10 L4.6 14.6" stroke="#00f000" stroke-width="1.4" fill="none"/><path d="M8.8 11.8 L16.6 4.2" stroke="#00f000" stroke-width="1.3" fill="none"/><path d="M7.6 15.4 L17.8 5.8" stroke="#000080" stroke-width="1.1" fill="none"/><path d="M7.4 9.2 L8.2 12" stroke="#000080" stroke-width="1" fill="none"/></svg>
<div class="t" style="left:934.50px;top:361.15px;font-size:14px;line-height:14px;color:#000;">0.1975</div>
<div class="t" style="left:1012.30px;top:361.02px;font-size:12.5px;line-height:12.5px;color:#000;transform:scaleX(1.0100);transform-origin:0 0;">Z Flexure (+X)</div>
<div class="t" style="left:1187.05px;top:361.02px;font-size:12.5px;line-height:12.5px;color:#000;transform:scaleX(0.9500);transform-origin:0 0;">8.304</div>
<div class="t" style="left:1264.50px;top:361.02px;font-size:12.5px;line-height:12.5px;color:#000;transform:scaleX(0.9500);transform-origin:0 0;">42.042</div>
<div class="t" style="left:1308.60px;top:361.02px;font-size:12.5px;line-height:12.5px;color:#000;">k-ft/ft</div>
<div class="t" style="left:1373.20px;top:361.02px;font-size:12.5px;line-height:12.5px;color:#000;transform:scaleX(1.0300);transform-origin:0 0;">+1.40D</div>
<svg class="r" style="left:867px;top:384px" width="22" height="20"><path d="M8.3 16.6 L18.3 6.8" stroke="#9a9a9a" stroke-width="1.3" fill="none"/><polygon points="3.8,9.8 6.8,9 8.3,12.2 16.6,3.8 17.8,5.2 8.2,15.8 6.8,15.8 3.8,14.6" fill="#008a00"/><path d="M4.6 10 L4.6 14.6" stroke="#00f000" stroke-width="1.4" fill="none"/><path d="M8.8 11.8 L16.6 4.2" stroke="#00f000" stroke-width="1.3" fill="none"/><path d="M7.6 15.4 L17.8 5.8" stroke="#000080" stroke-width="1.1" fill="none"/><path d="M7.4 9.2 L8.2 12" stroke="#000080" stroke-width="1" fill="none"/></svg>
<div class="t" style="left:934.50px;top:387.75px;font-size:14px;line-height:14px;color:#000;">0.2979</div>
<div class="t" style="left:1012.30px;top:387.62px;font-size:12.5px;line-height:12.5px;color:#000;transform:scaleX(1.0100);transform-origin:0 0;">Z Flexure (-X)</div>
<div class="t" style="left:1180.40px;top:387.62px;font-size:12.5px;line-height:12.5px;color:#000;transform:scaleX(0.9500);transform-origin:0 0;">12.525</div>
<div class="t" style="left:1264.50px;top:387.62px;font-size:12.5px;line-height:12.5px;color:#000;transform:scaleX(0.9500);transform-origin:0 0;">42.042</div>
<div class="t" style="left:1308.60px;top:387.62px;font-size:12.5px;line-height:12.5px;color:#000;">k-ft/ft</div>
<div class="t" style="left:1373.20px;top:387.62px;font-size:12.5px;line-height:12.5px;color:#000;transform:scaleX(1.0300);transform-origin:0 0;">+1.40D</div>
<svg class="r" style="left:867px;top:410px" width="22" height="20"><path d="M8.3 16.6 L18.3 6.8" stroke="#9a9a9a" stroke-width="1.3" fill="none"/><polygon points="3.8,9.8 6.8,9 8.3,12.2 16.6,3.8 17.8,5.2 8.2,15.8 6.8,15.8 3.8,14.6" fill="#008a00"/><path d="M4.6 10 L4.6 14.6" stroke="#00f000" stroke-width="1.4" fill="none"/><path d="M8.8 11.8 L16.6 4.2" stroke="#00f000" stroke-width="1.3" fill="none"/><path d="M7.6 15.4 L17.8 5.8" stroke="#000080" stroke-width="1.1" fill="none"/><path d="M7.4 9.2 L8.2 12" stroke="#000080" stroke-width="1" fill="none"/></svg>
<div class="t" style="left:934.50px;top:414.35px;font-size:14px;line-height:14px;color:#000;">0.4332</div>
<div class="t" style="left:1012.30px;top:414.22px;font-size:12.5px;line-height:12.5px;color:#000;transform:scaleX(1.0100);transform-origin:0 0;">X Flexure (+Z)</div>
<div class="t" style="left:1180.40px;top:414.22px;font-size:12.5px;line-height:12.5px;color:#000;transform:scaleX(0.9500);transform-origin:0 0;">18.212</div>
<div class="t" style="left:1264.50px;top:414.22px;font-size:12.5px;line-height:12.5px;color:#000;transform:scaleX(0.9500);transform-origin:0 0;">42.042</div>
<div class="t" style="left:1308.60px;top:414.22px;font-size:12.5px;line-height:12.5px;color:#000;">k-ft/ft</div>
<div class="t" style="left:1373.20px;top:414.22px;font-size:12.5px;line-height:12.5px;color:#000;transform:scaleX(1.0300);transform-origin:0 0;">+1.40D</div>
<svg class="r" style="left:867px;top:436px" width="22" height="20"><path d="M8.3 16.6 L18.3 6.8" stroke="#9a9a9a" stroke-width="1.3" fill="none"/><polygon points="3.8,9.8 6.8,9 8.3,12.2 16.6,3.8 17.8,5.2 8.2,15.8 6.8,15.8 3.8,14.6" fill="#008a00"/><path d="M4.6 10 L4.6 14.6" stroke="#00f000" stroke-width="1.4" fill="none"/><path d="M8.8 11.8 L16.6 4.2" stroke="#00f000" stroke-width="1.3" fill="none"/><path d="M7.6 15.4 L17.8 5.8" stroke="#000080" stroke-width="1.1" fill="none"/><path d="M7.4 9.2 L8.2 12" stroke="#000080" stroke-width="1" fill="none"/></svg>
<div class="t" style="left:934.50px;top:440.15px;font-size:14px;line-height:14px;color:#000;">0.3955</div>
<div class="t" style="left:1012.30px;top:440.02px;font-size:12.5px;line-height:12.5px;color:#000;transform:scaleX(1.0100);transform-origin:0 0;">X Flexure (-Z)</div>
<div class="t" style="left:1180.40px;top:440.02px;font-size:12.5px;line-height:12.5px;color:#000;transform:scaleX(0.9500);transform-origin:0 0;">16.629</div>
<div class="t" style="left:1264.50px;top:440.02px;font-size:12.5px;line-height:12.5px;color:#000;transform:scaleX(0.9500);transform-origin:0 0;">42.042</div>
<div class="t" style="left:1308.60px;top:440.02px;font-size:12.5px;line-height:12.5px;color:#000;">k-ft/ft</div>
<div class="t" style="left:1373.20px;top:440.02px;font-size:12.5px;line-height:12.5px;color:#000;transform:scaleX(1.0300);transform-origin:0 0;">+1.40D</div>
<svg class="r" style="left:867px;top:463px" width="22" height="20"><path d="M8.3 16.6 L18.3 6.8" stroke="#9a9a9a" stroke-width="1.3" fill="none"/><polygon points="3.8,9.8 6.8,9 8.3,12.2 16.6,3.8 17.8,5.2 8.2,15.8 6.8,15.8 3.8,14.6" fill="#008a00"/><path d="M4.6 10 L4.6 14.6" stroke="#00f000" stroke-width="1.4" fill="none"/><path d="M8.8 11.8 L16.6 4.2" stroke="#00f000" stroke-width="1.3" fill="none"/><path d="M7.6 15.4 L17.8 5.8" stroke="#000080" stroke-width="1.1" fill="none"/><path d="M7.4 9.2 L8.2 12" stroke="#000080" stroke-width="1" fill="none"/></svg>
<div class="t" style="left:946.00px;top:466.75px;font-size:14px;line-height:14px;color:#000;">n/a</div>
<div class="t" style="left:1012.30px;top:466.62px;font-size:12.5px;line-height:12.5px;color:#000;transform:scaleX(1.0100);transform-origin:0 0;">1-way Shear (+X)</div>
<div class="t" style="left:1200.35px;top:466.62px;font-size:12.5px;line-height:12.5px;color:#000;transform:scaleX(0.9500);transform-origin:0 0;">0.0</div>
<div class="t" style="left:1264.50px;top:466.62px;font-size:12.5px;line-height:12.5px;color:#000;transform:scaleX(0.9500);transform-origin:0 0;">82.158</div>
<div class="t" style="left:1308.60px;top:466.62px;font-size:12.5px;line-height:12.5px;color:#000;">psi</div>
<div class="t" style="left:1373.20px;top:466.62px;font-size:12.5px;line-height:12.5px;color:#000;transform:scaleX(1.0300);transform-origin:0 0;">n/a</div>
<svg class="r" style="left:867px;top:488px" width="22" height="20"><path d="M8.3 16.6 L18.3 6.8" stroke="#9a9a9a" stroke-width="1.3" fill="none"/><polygon points="3.8,9.8 6.8,9 8.3,12.2 16.6,3.8 17.8,5.2 8.2,15.8 6.8,15.8 3.8,14.6" fill="#008a00"/><path d="M4.6 10 L4.6 14.6" stroke="#00f000" stroke-width="1.4" fill="none"/><path d="M8.8 11.8 L16.6 4.2" stroke="#00f000" stroke-width="1.3" fill="none"/><path d="M7.6 15.4 L17.8 5.8" stroke="#000080" stroke-width="1.1" fill="none"/><path d="M7.4 9.2 L8.2 12" stroke="#000080" stroke-width="1" fill="none"/></svg>
<div class="t" style="left:934.50px;top:492.65px;font-size:14px;line-height:14px;color:#000;">0.2210</div>
<div class="t" style="left:1012.30px;top:492.52px;font-size:12.5px;line-height:12.5px;color:#000;transform:scaleX(1.0100);transform-origin:0 0;">1-way Shear (-X)</div>
<div class="t" style="left:1180.40px;top:492.52px;font-size:12.5px;line-height:12.5px;color:#000;transform:scaleX(0.9500);transform-origin:0 0;">18.160</div>
<div class="t" style="left:1264.50px;top:492.52px;font-size:12.5px;line-height:12.5px;color:#000;transform:scaleX(0.9500);transform-origin:0 0;">82.158</div>
<div class="t" style="left:1308.60px;top:492.52px;font-size:12.5px;line-height:12.5px;color:#000;">psi</div>
<div class="t" style="left:1373.20px;top:492.52px;font-size:12.5px;line-height:12.5px;color:#000;transform:scaleX(1.0300);transform-origin:0 0;">+1.40D</div>
<svg class="r" style="left:867px;top:515px" width="22" height="20"><path d="M8.3 16.6 L18.3 6.8" stroke="#9a9a9a" stroke-width="1.3" fill="none"/><polygon points="3.8,9.8 6.8,9 8.3,12.2 16.6,3.8 17.8,5.2 8.2,15.8 6.8,15.8 3.8,14.6" fill="#008a00"/><path d="M4.6 10 L4.6 14.6" stroke="#00f000" stroke-width="1.4" fill="none"/><path d="M8.8 11.8 L16.6 4.2" stroke="#00f000" stroke-width="1.3" fill="none"/><path d="M7.6 15.4 L17.8 5.8" stroke="#000080" stroke-width="1.1" fill="none"/><path d="M7.4 9.2 L8.2 12" stroke="#000080" stroke-width="1" fill="none"/></svg>
<div class="t" style="left:934.50px;top:518.85px;font-size:14px;line-height:14px;color:#000;">0.3382</div>
<div class="t" style="left:1012.30px;top:518.72px;font-size:12.5px;line-height:12.5px;color:#000;transform:scaleX(1.0100);transform-origin:0 0;">1-way Shear (+Z)</div>
<div class="t" style="left:1180.40px;top:518.72px;font-size:12.5px;line-height:12.5px;color:#000;transform:scaleX(0.9500);transform-origin:0 0;">27.785</div>
<div class="t" style="left:1264.50px;top:518.72px;font-size:12.5px;line-height:12.5px;color:#000;transform:scaleX(0.9500);transform-origin:0 0;">82.158</div>
<div class="t" style="left:1308.60px;top:518.72px;font-size:12.5px;line-height:12.5px;color:#000;">psi</div>
<div class="t" style="left:1373.20px;top:518.72px;font-size:12.5px;line-height:12.5px;color:#000;transform:scaleX(1.0300);transform-origin:0 0;">+1.40D</div>
<svg class="r" style="left:867px;top:541px" width="22" height="20"><path d="M8.3 16.6 L18.3 6.8" stroke="#9a9a9a" stroke-width="1.3" fill="none"/><polygon points="3.8,9.8 6.8,9 8.3,12.2 16.6,3.8 17.8,5.2 8.2,15.8 6.8,15.8 3.8,14.6" fill="#008a00"/><path d="M4.6 10 L4.6 14.6" stroke="#00f000" stroke-width="1.4" fill="none"/><path d="M8.8 11.8 L16.6 4.2" stroke="#00f000" stroke-width="1.3" fill="none"/><path d="M7.6 15.4 L17.8 5.8" stroke="#000080" stroke-width="1.1" fill="none"/><path d="M7.4 9.2 L8.2 12" stroke="#000080" stroke-width="1" fill="none"/></svg>
<div class="t" style="left:934.50px;top:545.55px;font-size:14px;line-height:14px;color:#000;">0.3044</div>
<div class="t" style="left:1012.30px;top:545.42px;font-size:12.5px;line-height:12.5px;color:#000;transform:scaleX(1.0100);transform-origin:0 0;">1-way Shear (-Z)</div>
<div class="t" style="left:1180.40px;top:545.42px;font-size:12.5px;line-height:12.5px;color:#000;transform:scaleX(0.9500);transform-origin:0 0;">25.010</div>
<div class="t" style="left:1264.50px;top:545.42px;font-size:12.5px;line-height:12.5px;color:#000;transform:scaleX(0.9500);transform-origin:0 0;">82.158</div>
<div class="t" style="left:1308.60px;top:545.42px;font-size:12.5px;line-height:12.5px;color:#000;">psi</div>
<div class="t" style="left:1373.20px;top:545.42px;font-size:12.5px;line-height:12.5px;color:#000;transform:scaleX(1.0300);transform-origin:0 0;">+1.40D</div>
<svg class="r" style="left:867px;top:568px" width="22" height="20"><path d="M8.3 16.6 L18.3 6.8" stroke="#9a9a9a" stroke-width="1.3" fill="none"/><polygon points="3.8,9.8 6.8,9 8.3,12.2 16.6,3.8 17.8,5.2 8.2,15.8 6.8,15.8 3.8,14.6" fill="#008a00"/><path d="M4.6 10 L4.6 14.6" stroke="#00f000" stroke-width="1.4" fill="none"/><path d="M8.8 11.8 L16.6 4.2" stroke="#00f000" stroke-width="1.3" fill="none"/><path d="M7.6 15.4 L17.8 5.8" stroke="#000080" stroke-width="1.1" fill="none"/><path d="M7.4 9.2 L8.2 12" stroke="#000080" stroke-width="1" fill="none"/></svg>
<div class="t" style="left:934.50px;top:572.15px;font-size:14px;line-height:14px;color:#000;">0.4901</div>
<div class="t" style="left:1012.30px;top:572.02px;font-size:12.5px;line-height:12.5px;color:#000;transform:scaleX(1.0100);transform-origin:0 0;">2-way Punching</div>
<div class="t" style="left:1180.40px;top:572.02px;font-size:12.5px;line-height:12.5px;color:#000;transform:scaleX(0.9500);transform-origin:0 0;">80.529</div>
<div class="t" style="left:1257.85px;top:572.02px;font-size:12.5px;line-height:12.5px;color:#000;transform:scaleX(0.9500);transform-origin:0 0;">164.317</div>
<div class="t" style="left:1308.60px;top:572.02px;font-size:12.5px;line-height:12.5px;color:#000;">psi</div>
<div class="t" style="left:1373.20px;top:572.02px;font-size:12.5px;line-height:12.5px;color:#000;transform:scaleX(1.0300);transform-origin:0 0;">+1.40D</div>
</body></html>
